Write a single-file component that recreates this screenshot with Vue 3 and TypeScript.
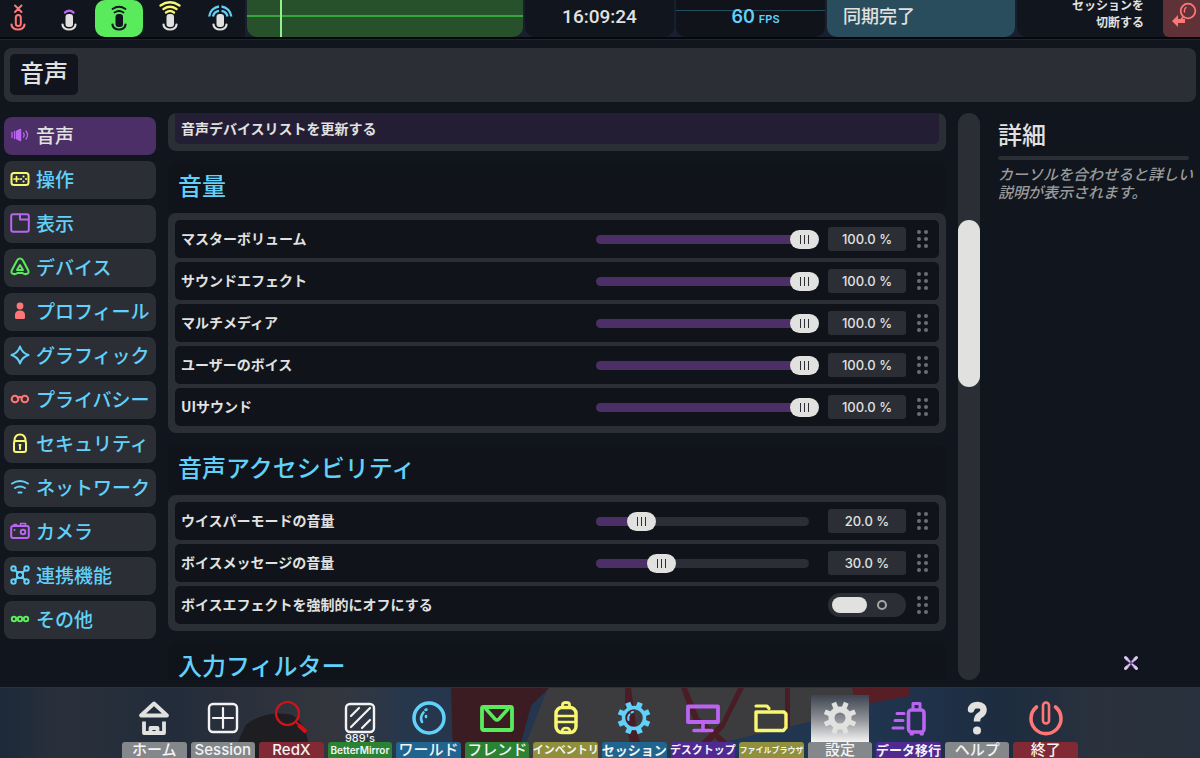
<script setup lang="ts">
import { ref } from 'vue'

interface Category { label: string; color: string; icon: string }
interface VolumeRow { id: string; label: string; value: number }
interface DockItem { label: string; color: string; tone: string; size: string; icon: string; over?: string; active?: boolean }

const teeth = (cx: number, cy: number, from: number, to: number, width: number): string =>
  Array.from({ length: 8 }, (_, i) => {
    const a = (i * Math.PI) / 4 + Math.PI / 8
    const p = (r: number) => `${(cx + r * Math.cos(a)).toFixed(1)} ${(cy + r * Math.sin(a)).toFixed(1)}`
    return `<path d="M${p(from)}L${p(to)}" stroke-width="${width}"/>`
  }).join('')

const cradle = '<path d="M6.5 24.5a6.5 5 0 0 0 13 0" fill="none" stroke-width="2.2"/>'
const body = '<rect x="9.5" y="14" width="7.5" height="13" rx="3" stroke="none" fill="currentColor"/>'

const mics = [
  { name: 'ミュート', color: '#ff7676', on: false, icon: `<path d="M10 5.500l6.500 6.500M16.500 5.500L10 12" stroke-width="2"/><rect x="10.800" y="15" width="5" height="11" rx="2.500" fill="none" stroke-width="2"/>${cradle}` },
  { name: 'ささやき', color: '#e1e1e0', on: false, icon: `<path d="M9 12.500q4.200-3.500 8.500 0" fill="none" stroke="#ba64f2" stroke-width="2.400"/>${body}${cradle}` },
  { name: '通常', color: '#11151d', on: true, icon: `<path d="M6.500 9q6.500-4.500 13 0M8.500 12.500q4.500-3 9 0" fill="none" stroke-width="1.800"/>${body}${cradle}` },
  { name: '叫び', color: '#e1e1e0', on: false, icon: `<path d="M3.500 5.500q9.500-6.500 19 0M6.500 9q6.500-4.500 13 0M9 12.500q4-3 8 0" fill="none" stroke="#f8f770" stroke-width="2.300"/>${body}${cradle}` },
  { name: '放送', color: '#e1e1e0', on: false, icon: `<path d="M2.200 16.500A11 11 0 0 1 12 6.500M14.500 6.500A11 11 0 0 1 24.300 16.500M6 16.500A7 7 0 0 1 12 10.800M14.500 10.800A7 7 0 0 1 20.500 16.500" fill="none" stroke="#61d1fa" stroke-width="2.300" stroke-linecap="butt"/>${body}${cradle}` },
]

const categories: Category[] = [
  { label: '音声', color: '#ba64f2', icon: '<path d="M2 7.500v5M4.500 6.500v7" stroke-width="1.300"/><path d="M6.500 6.500l4-2v11l-4-2z" fill="currentColor" stroke-width="1.500"/><path d="M13.500 8q1.500 2 0 4M16 6q3 4 0 8" stroke-width="1.300"/>' },
  { label: '操作', color: '#f8f770', icon: '<rect x="1.500" y="4" width="17" height="12" rx="2.500"/><path d="M4 10h5M6.500 7.500v5" stroke-width="1.700"/><path d="M11 10h.1M13.500 7.500h.1M13.500 12.500h.1M16 10h.1" stroke-width="2"/>' },
  { label: '表示', color: '#ba64f2', icon: '<rect x="1.200" y="1.200" width="17.600" height="17.600" rx="2"/><path d="M10 1.500v5h8.500"/>' },
  { label: 'デバイス', color: '#59eb5c', icon: '<path d="M10 1.500q2 0 3 2l5.300 10q1 3-1.800 3.500-2 .5-4-1h-5q-2 1.500-4 1Q.7 16.500 1.700 13.500L7 3.500q1-2 3-2z"/><path d="M10 8l3 5H7z"/>' },
  { label: 'プロフィール', color: '#ff7676', icon: '<circle cx="10" cy="5" r="3.400" fill="currentColor" stroke="none"/><path d="M5 18v-4q0-4.500 5-4.500t5 4.500v2.500q0 1.500-1.500 1.500h-7Q5 18 5 16.500z" fill="currentColor" stroke="none"/>' },
  { label: 'グラフィック', color: '#61d1fa', icon: '<path d="M10 1.500q2 6.500 8.500 8.500Q12 12 10 18.500 8 12 1.500 10 8 8 10 1.500z"/>' },
  { label: 'プライバシー', color: '#ff7676', icon: '<circle cx="5" cy="10" r="3.300"/><circle cx="14.800" cy="10" r="3.300"/><path d="M7.500 8.500q2.300-1 4.600 0"/>' },
  { label: 'セキュリティ', color: '#f8f770', icon: '<path d="M4.500 8Q4.500 1.500 10 1.500T15.500 8"/><rect x="4" y="8" width="12" height="11" rx="2"/><path d="M10 12v4M9.500 12h1"/>' },
  { label: 'ネットワーク', color: '#61d1fa', icon: '<path d="M2 6.500q8-5 16 0M5 11q5-3 10 0M8.500 15.500h3"/>' },
  { label: 'カメラ', color: '#ba64f2', icon: '<path d="M10.500 5V2.500h5V5M4 5V3.500h2.500V5" stroke-width="1.600"/><rect x="1.200" y="5" width="17.600" height="12" rx="2"/><circle cx="13" cy="11" r="2.300"/><path d="M4.500 9v.1"/>' },
  { label: '連携機能', color: '#61d1fa', icon: '<path d="M5 5l3 3M15 5l-3 3M5 15l3-3M15 15l-3-3"/><rect x="7" y="7" width="6" height="6" rx="1.500"/><circle cx="3.500" cy="3.500" r="2.200"/><circle cx="16.500" cy="3.500" r="2.200"/><circle cx="3.500" cy="16.500" r="2.200"/><circle cx="16.500" cy="16.500" r="2.200"/>' },
  { label: 'その他', color: '#59eb5c', icon: '<circle cx="4" cy="10" r="2.200"/><circle cx="10" cy="10" r="2.200"/><circle cx="16" cy="10" r="2.200"/>' },
]
const current = ref('音声')

const volumes = ref<VolumeRow[]>([
  { id: 'master', label: 'マスターボリューム', value: 100 },
  { id: 'effects', label: 'サウンドエフェクト', value: 100 },
  { id: 'media', label: 'マルチメディア', value: 100 },
  { id: 'voice', label: 'ユーザーのボイス', value: 100 },
  { id: 'ui', label: 'UIサウンド', value: 100 },
])
const accessibility = ref<VolumeRow[]>([
  { id: 'whisper', label: 'ウイスパーモードの音量', value: 20 },
  { id: 'message', label: 'ボイスメッセージの音量', value: 30 },
])
const sections = [
  { title: '音量', rows: volumes, toggle: '' },
  { title: '音声アクセシビリティ', rows: accessibility, toggle: 'ボイスエフェクトを強制的にオフにする' },
]
const effectsOff = ref(false)

const gearWhite = `<g stroke-linecap="butt">${teeth(18, 23, 9, 16.5, 5)}</g><circle cx="18" cy="23" r="8.500" stroke-width="6"/>`
const gearBlue = `<g stroke-linecap="butt">${teeth(18, 23, 11, 16.5, 5.5)}</g><circle cx="18" cy="23" r="10.500" stroke-width="3.500"/><path d="M12.500 25q-1-3 1-5.500M15.500 17.500l1.500-.7" stroke-width="2"/>`

const dock: DockItem[] = [
  { label: 'ホーム', color: '#e1e1e0', tone: 'grey', size: 'lg', icon: '<path d="M18 8.500L5 20.500h26z" stroke-width="3.800"/><path d="M8 26.500V38h20V26.500M14.500 38v-5h7v5" stroke-width="3.800" stroke-linecap="butt"/>' },
  { label: 'Session', color: '#f2f2f2', tone: 'grey', size: 'lg', icon: '<rect x="4" y="9" width="28" height="28" rx="4" stroke-width="2.400"/><path d="M8 23h20M18 13v20" stroke-width="2.200"/>' },
  { label: 'RedX', color: '#d31217', tone: 'red', size: 'lg', icon: '<circle cx="14.500" cy="18.500" r="11.500" stroke-width="2.200"/><path d="M23 27l3 3" stroke-width="2"/><path d="M25.500 30l7.500 7" stroke-width="4" stroke-linecap="butt"/>' },
  { label: 'BetterMirror', over: "989's", color: '#f2f2f2', tone: 'green', size: 'tiny', icon: '<rect x="4" y="9" width="28" height="28" rx="4" stroke-width="2.400"/><path d="M9 21l8-8M9 32l19-19M20 33l8-8" stroke-width="2.200"/>' },
  { label: 'ワールド', color: '#61d1fa', tone: 'blue', size: 'lg', icon: '<circle cx="18" cy="23" r="15" stroke-width="3.500"/><path d="M11 27q-2.500-5 1.500-9.500M14.500 15l1-.5M15 21v1" stroke-width="2.600"/>' },
  { label: 'フレンド', color: '#59eb5c', tone: 'green', size: 'lg', icon: '<rect x="3" y="12" width="30" height="23" rx="1.500" stroke-width="3.800"/><path d="M7 14l9 10q2 2 4 0l9-10" stroke-width="3.400"/>' },
  { label: 'インベントリ', color: '#f8f770', tone: 'olive', size: 'sm', icon: '<rect x="8" y="12.500" width="20" height="25" rx="6" stroke-width="3.500"/><path d="M14.500 12V9.500q0-2 3.500-2t3.500 2V12" stroke-width="2.800"/><path d="M8 21h20M8 27h20M14 37q0-4 4-4t4 4" stroke-width="2.600"/>' },
  { label: 'セッション', color: '#61d1fa', tone: 'blue', size: 'md', icon: gearBlue },
  { label: 'デスクトップ', color: '#ba64f2', tone: 'purple', size: 'sm', icon: '<rect x="3" y="11.500" width="30" height="15.500" stroke-width="3.800"/><path d="M18 28v7M9 35.500h18" stroke-width="3.600"/>' },
  { label: 'ファイルブラウザ', color: '#f8f770', tone: 'olive', size: 'xs', icon: '<path d="M3 11h11l2 2.500" stroke-width="3.200"/><path d="M3 17h28l2 2v13.500l-2.500 3H3z" stroke-width="3.400"/>' },
  { label: '設定', color: '#e1e1e0', tone: 'grey', size: 'lg', icon: gearWhite, active: true },
  { label: 'データ移行', color: '#ba64f2', tone: 'purple', size: 'md', icon: '<rect x="17.500" y="15" width="15.500" height="22" rx="3" stroke-width="3.600"/><path d="M22 14V8.500h7V14M20 39h1.500M30 39h1.500" stroke-width="3"/><path d="M6 18.500h7M4 25.500h8M2 33h10" stroke-width="3"/>' },
  { label: 'ヘルプ', color: '#e1e1e0', tone: 'grey', size: 'lg', icon: '<path d="M12 14.500q1-4.500 6.500-4.500 6.500.5 6 5.500-.3 3-4 5-2.500 1.500-2.500 6" stroke-width="6.500" stroke-linecap="butt"/><circle cx="12" cy="14.500" r="3.200" fill="currentColor" stroke="none"/><circle cx="18" cy="35.500" r="4" fill="currentColor" stroke="none"/>' },
  { label: '終了', color: '#ff7676', tone: 'red', size: 'lg', icon: '<path d="M8.500 12A15 15 0 1 0 27.500 12" stroke-width="3.600"/><rect x="15" y="7.500" width="6" height="21" rx="3" stroke-width="2.600"/>' },
]
</script>

<template>
  <div class="screen">
    <header class="status">
      <div class="mics">
        <button v-for="m in mics" :key="m.name" type="button" class="mic" :class="{ on: m.on }" :aria-label="m.name" :style="{ color: m.color }">
          <svg viewBox="0 0 26 36" width="26" height="36" stroke="currentColor" stroke-linecap="round" v-html="m.icon" />
        </button>
      </div>
      <div class="cell meter"><span class="peak"></span></div>
      <div class="cell clock">16:09:24</div>
      <div class="cell fps"><strong>60</strong><small>FPS</small></div>
      <div class="cell sync">同期完了</div>
      <div class="cell leave">
        <span class="leave-text">セッションを<br>切断する</span>
        <button type="button" class="leave-button" aria-label="セッションを切断する">
          <svg viewBox="0 0 26 28" width="26" height="28" fill="none" stroke="#ff7676" stroke-linecap="round">
            <circle cx="17" cy="11" r="7.300" stroke-width="1.800" />
            <path d="M13.500 12q-.5-3 1.500-4.500" stroke-width="1.400" />
            <path d="M12 17l-2 3" stroke-width="1.800" />
            <path d="M1 21l6-6v4h7v4H7v4z" fill="#ff7676" stroke="none" />
          </svg>
        </button>
      </div>
    </header>

    <main class="window">
      <nav class="crumbs"><button type="button" class="crumb">音声</button></nav>
      <div class="columns">
        <nav class="categories">
          <button v-for="c in categories" :key="c.label" type="button" class="category" :class="{ selected: current === c.label }" @click="current = c.label">
            <svg viewBox="0 0 20 20" width="20" height="20" fill="none" stroke="currentColor" stroke-width="2" stroke-linecap="round" stroke-linejoin="round" :style="{ color: c.color }" v-html="c.icon" />
            <span>{{ c.label }}</span>
          </button>
        </nav>

        <div class="view">
          <div class="group first">
            <button type="button" class="row refresh">音声デバイスリストを更新する</button>
          </div>
          <section v-for="s in sections" :key="s.title">
            <h2>{{ s.title }}</h2>
            <div class="group">
              <div v-for="r in s.rows.value" :key="r.id" class="row">
                <label :for="r.id">{{ r.label }}</label>
                <div class="slider">
                  <div class="track"><div class="fill" :style="{ width: r.value + '%' }"></div></div>
                  <input :id="r.id" v-model.number="r.value" type="range" min="0" max="100">
                </div>
                <input class="value" type="text" :value="r.value.toFixed(1) + ' %'" :aria-label="r.label" readonly>
                <button type="button" class="grip" aria-label="メニュー">
                  <i v-for="n in 6" :key="n"></i>
                </button>
              </div>
              <div v-if="s.toggle" class="row">
                <label for="effects-off">{{ s.toggle }}</label>
                <input id="effects-off" v-model="effectsOff" class="toggle" type="checkbox">
                <button type="button" class="grip" aria-label="メニュー">
                  <i v-for="n in 6" :key="n"></i>
                </button>
              </div>
            </div>
          </section>
          <h2>入力フィルター</h2>
        </div>

        <div class="scrollbar"><div class="thumb"></div></div>

        <aside class="details">
          <h2>詳細</h2>
          <hr>
          <p>カーソルを合わせると詳しい<br>説明が表示されます。</p>
        </aside>
      </div>
      <svg class="cursor" viewBox="0 0 16 16" width="16" height="16" stroke="#dcc8ee" stroke-linecap="round">
        <path d="M3 3l3 3M13 3l-3 3M3 13l3-3M13 13l-3-3" stroke="#8a4fc0" stroke-width="3" />
        <path d="M2.500 2.500l1.500 1.500M13.500 2.500L12 4M2.500 13.500L4 12M13.500 13.500L12 12" stroke-width="3" />
        <path d="M5 5l2 2M11 5L9 7M5 11l2-2M11 11L9 9" stroke-width="1.500" />
      </svg>
    </main>

    <footer class="dock">
      <svg class="scene" viewBox="0 0 1200 71" preserveAspectRatio="none" aria-hidden="true">
        <defs>
          <linearGradient id="sky" x1="0" y1="0" x2="1" y2="0">
            <stop offset="0" stop-color="#1c2939" /><stop offset=".05" stop-color="#29303a" /><stop offset=".14" stop-color="#222c3a" />
            <stop offset=".28" stop-color="#34363d" /><stop offset=".34" stop-color="#26374c" /><stop offset=".72" stop-color="#203550" />
            <stop offset=".84" stop-color="#1d2c3f" /><stop offset=".92" stop-color="#2b323d" /><stop offset="1" stop-color="#27303c" />
          </linearGradient>
        </defs>
        <rect width="1200" height="71" fill="url(#sky)" />
        <path d="M216 71l20-12 10-22q20-15 44-10 12 3 18 26l2 18z" fill="#1d1d22" />
        <path d="M548 0h330l-10 20-148 36-120 15H520z" fill="#3c3b3d" />
        <path d="M451 0h98l-18 18-14 53h-64z" fill="#3b1c23" />
        <path d="M625 0h6l6 45 8 26h-12l-8-40zM681 0h6l12 30 28 24-4 4-30-26zM738 0h6l-20 40-18 20-6-4 22-22zM785 0h5v40h-5z" fill="#4a1d26" />
        <path d="M852 0h57v8l-53 10z" fill="#571e26" />
        <path d="M650 71l110-24v24z" fill="#1f3858" />
      </svg>
      <button v-for="d in dock" :key="d.label" type="button" class="app">
        <span class="art" :class="{ active: d.active }">
          <svg viewBox="0 0 36 47" width="36" height="47" fill="none" stroke="currentColor" stroke-linecap="round" stroke-linejoin="round" :style="{ color: d.color }" v-html="d.icon" />
          <span v-if="d.over" class="over">{{ d.over }}</span>
        </span>
        <span class="name" :class="[d.tone, d.size]">{{ d.label }}</span>
      </button>
    </footer>
  </div>
</template>

<style>
html, body { background: #11151d; overflow: hidden; }
</style>

<style scoped>
.screen {
  --ink: #e1e1e0;
  --cyan: #61d1fa;
  --panel: #2b2f35;
  --base: #11151d;
  display: flex;
  flex-direction: column;
  height: 100vh;
  overflow: hidden;
  background: #05070d;
  color: var(--ink);
  font-family: "Noto Sans CJK JP", sans-serif;
  font-weight: 500;
}
* { box-sizing: border-box; }
button, input {
  margin: 0;
  padding: 0;
  border: 0;
  background: none;
  color: inherit;
  font: inherit;
}
h2, p, hr { margin: 0; border: 0; }
svg { display: block; flex: none; }

.status {
  display: grid;
  grid-template-columns: 245px minmax(0, 276fr) minmax(0, 149fr) minmax(0, 149fr) minmax(0, 188fr) minmax(0, 183fr);
  column-gap: 2px;
  flex: none;
  height: 37px;
  background: #18202f;
}
.mics {
  display: flex;
  justify-content: space-between;
  margin-left: -6px;
  padding-right: 1px;
  background: var(--base);
}
.mic {
  display: flex;
  justify-content: center;
  width: 48px;
  height: 37px;
  border-radius: 0 0 10px 10px;
}
.mic.on { background: #59eb5c; border-radius: 10px; }
.cell {
  display: flex;
  align-items: center;
  height: 37px;
  min-width: 0;
  border-radius: 0 0 10px 10px;
  background: var(--base);
  white-space: nowrap;
}
.meter {
  position: relative;
  background: linear-gradient(#37a63c, #37a63c) 0 15px / 100% 2px no-repeat #27512b;
}
.peak {
  position: absolute;
  left: 12%;
  top: 0;
  width: 2px;
  height: 100%;
  background: #94f08f;
}
.clock {
  justify-content: center;
  padding-bottom: 5px;
  font-family: Roboto, sans-serif;
  font-size: 19px;
}
.fps {
  justify-content: center;
  align-items: baseline;
  gap: 4px;
  padding-left: 10px;
  color: var(--cyan);
  font-family: Inter, sans-serif;
  line-height: 33px;
  background: linear-gradient(#23505f, #23505f) 0 10px / 100% 1px no-repeat #10131a;
}
.fps strong { font-size: 18px; font-weight: 600; }
.fps small { font-size: 11px; font-weight: 600; }
.sync {
  padding: 0 16px 7px;
  background: #294d5c;
  font-size: 18px;
}
.leave {
  align-items: flex-end;
  justify-content: flex-end;
  gap: 19px;
}
.leave-text {
  padding-bottom: 7px;
  font-size: 12px;
  font-weight: 700;
  line-height: 17px;
  text-align: right;
}
.leave-button {
  display: flex;
  align-items: flex-start;
  justify-content: flex-end;
  width: 37px;
  height: 37px;
  padding-right: 3px;
  border-radius: 0 0 0 6px;
  background: #5f3238;
}

.window {
  position: relative;
  display: flex;
  flex-direction: column;
  flex: 1;
  min-height: 0;
  margin-top: 2px;
  padding-top: 8px;
  border-top: 1px solid #1a2638;
  background: var(--base);
}
.crumbs {
  flex: none;
  margin: 0 4px;
  padding: 6px 6px 7px;
  border-radius: 8px;
  background: var(--panel);
}
.crumb {
  display: block;
  padding: 0 10px 5px;
  border-radius: 5px;
  background: #11141c;
  font-size: 24px;
  line-height: 36px;
}
.columns {
  display: grid;
  grid-template-columns: 152px minmax(0, 1fr) 22px 204px;
  column-gap: 12px;
  flex: 1;
  min-height: 0;
  padding: 11px 4px 7px;
}
.categories {
  display: flex;
  flex-direction: column;
  gap: 6px;
  padding-top: 4px;
}
.category {
  display: flex;
  align-items: center;
  gap: 6px;
  flex: none;
  height: 38px;
  padding: 0 6px 2px;
  border-radius: 8px;
  background: var(--panel);
  color: var(--cyan);
  font-size: 19px;
  line-height: 36px;
  white-space: nowrap;
}
.category.selected { background: #4b2f66; color: var(--ink); }

.view {
  min-height: 0;
  overflow: hidden;
  border-radius: 8px 8px 0 0;
}
.view h2 {
  height: 50px;
  margin-top: 12px;
  padding: 0 10px;
  border-radius: 8px;
  background: #10131a;
  color: var(--cyan);
  font-size: 24px;
  font-weight: 500;
  line-height: 44px;
}
.group {
  display: flex;
  flex-direction: column;
  gap: 4px;
  padding: 7px;
  border-radius: 8px;
  background: var(--panel);
}
.group.first { padding-top: 0; }
.row {
  display: flex;
  align-items: center;
  height: 38px;
  padding: 0 6px;
  border-radius: 5px;
  background: #10131a;
  font-size: 14px;
  font-weight: 700;
}
.row label { flex: 1; padding-bottom: 2px; }
.refresh {
  height: 31px;
  padding-bottom: 2px;
  border-radius: 0 0 5px 5px;
  background: #241e35;
}
.slider {
  display: grid;
  align-items: center;
  flex: 0 1 233px;
  margin-right: 9px;
}
.track, .slider input { grid-area: 1 / 1; }
.track {
  height: 9px;
  margin: 0 10px;
  overflow: hidden;
  border-radius: 5px;
  background: var(--panel);
}
.fill { height: 100%; background: #4b2f66; }
.slider input {
  appearance: none;
  width: 100%;
  height: 19px;
  cursor: pointer;
}
.slider input::-webkit-slider-thumb {
  appearance: none;
  width: 29px;
  height: 19px;
  border-radius: 10px;
  background:
    linear-gradient(#2b2f35, #2b2f35) 10px 5px / 1px 9px no-repeat,
    linear-gradient(#2b2f35, #2b2f35) 14px 5px / 1px 9px no-repeat,
    linear-gradient(#2b2f35, #2b2f35) 18px 5px / 1px 9px no-repeat,
    #e1e1e0;
}
.value {
  width: 78px;
  height: 24px;
  border-radius: 3px;
  background: var(--panel);
  font-family: Inter, sans-serif;
  font-size: 13px;
  font-weight: 500;
  text-align: center;
}
.toggle {
  appearance: none;
  display: flex;
  align-items: center;
  gap: 10px;
  width: 78px;
  height: 24px;
  padding: 0 4px;
  border-radius: 12px;
  background: var(--panel);
}
.toggle::before {
  content: "";
  width: 35px;
  height: 16px;
  border-radius: 8px;
  background: var(--ink);
}
.toggle::after {
  content: "";
  box-sizing: border-box;
  width: 10px;
  height: 10px;
  border: 2px solid #a5a6a7;
  border-radius: 50%;
}
.toggle:checked { flex-direction: row-reverse; background: #4b2f66; }
.grip {
  display: grid;
  grid-template-columns: 4px 4px;
  gap: 3px;
  margin: 0 5px 0 11px;
}
.grip i {
  width: 4px;
  height: 4px;
  border-radius: 50%;
  background: #6c6e71;
}

.scrollbar {
  display: flex;
  flex-direction: column;
  border-radius: 11px;
  background: var(--panel);
}
.scrollbar::before { content: ""; flex: 107 1 0; }
.scrollbar::after { content: ""; flex: 293 1 0; }
.thumb {
  flex: 167 1 0;
  border-radius: 11px;
  background: var(--ink);
}

.details { padding: 3px 7px 0 6px; }
.details h2 {
  font-size: 24px;
  font-weight: 500;
  line-height: 36px;
}
.details hr {
  height: 4px;
  margin: 4px 0 5px;
  border-radius: 2px;
  background: var(--panel);
}
.details p {
  color: #9a9b9c;
  font-size: 15px;
  font-style: italic;
  line-height: 18px;
  white-space: nowrap;
}
.cursor {
  position: absolute;
  right: 61px;
  bottom: 16px;
}

.dock {
  position: relative;
  display: flex;
  justify-content: center;
  gap: 4px;
  flex: none;
  height: 71px;
  padding: 7px 122px 0;
  border-top: 1px solid #2a3240;
}
.scene {
  position: absolute;
  inset: 0;
  width: 100%;
  height: 100%;
}
.app {
  position: relative;
  display: flex;
  flex-direction: column;
  align-items: stretch;
  flex: 1 1 0;
  min-width: 0;
  color: #f4f4f4;
  font-family: Inter, "Noto Sans CJK JP", sans-serif;
}
.art {
  position: relative;
  display: flex;
  justify-content: center;
  height: 47px;
  margin: 0 3px;
}
.art.active { background: linear-gradient(#3d4450, #8b8e93 50%, #f4f4f4); }
.over {
  position: absolute;
  left: 0;
  right: 0;
  bottom: -1px;
  font-size: 11px;
  line-height: 9px;
  text-align: center;
}
.name {
  display: flex;
  justify-content: center;
  height: 16px;
  border-radius: 3px 3px 0 0;
  line-height: 16px;
  white-space: nowrap;
}
.grey { background: #85888b; }
.red { background: #822936; }
.green { background: #2a8332; }
.blue { background: #20658f; }
.olive { background: #8f8f3c; }
.purple { background: #4f2a92; }
.lg { font-size: 15px; }
.md { font-size: 13px; font-weight: 700; }
.sm { font-size: 11px; font-weight: 700; }
.tiny { font-size: 10px; font-weight: 600; }
.xs { font-size: 8px; font-weight: 700; }
</style>
